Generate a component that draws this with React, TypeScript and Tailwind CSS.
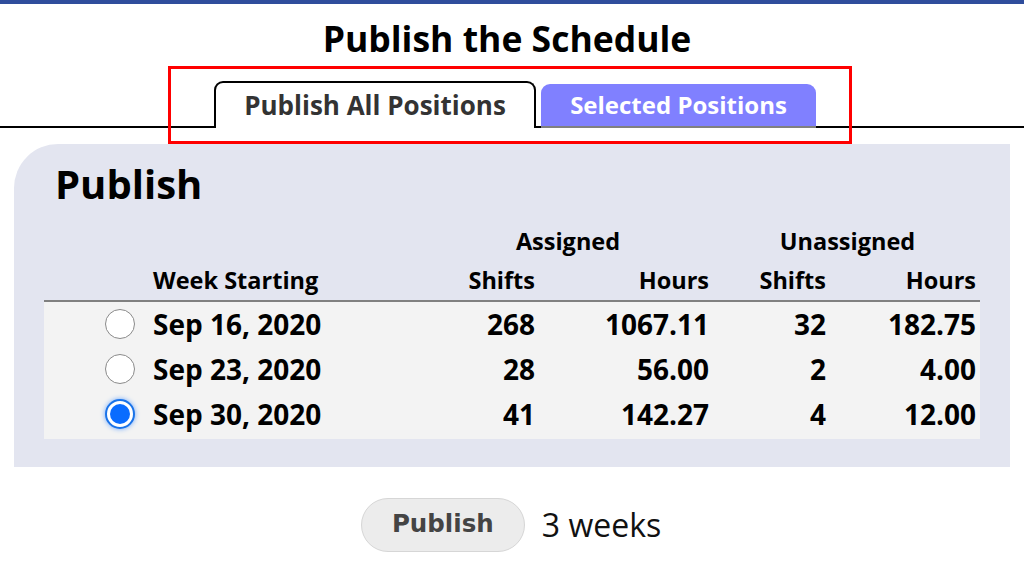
import React from "react";

const rows = [
  { week: "Sep 16, 2020", aShifts: "268", aHours: "1067.11", uShifts: "32", uHours: "182.75", checked: false },
  { week: "Sep 23, 2020", aShifts: "28", aHours: "56.00", uShifts: "2", uHours: "4.00", checked: false },
  { week: "Sep 30, 2020", aShifts: "41", aHours: "142.27", uShifts: "4", uHours: "12.00", checked: true },
];

const grid = "grid grid-cols-[109px_262px_120px_174px_117px_150px] items-center";

function Radio({ checked }: { checked: boolean }) {
  if (checked) {
    return (
      <span className="w-[30px] h-[30px] rounded-full border-2 border-[#1a73e8] bg-white flex items-center justify-center shadow-[0_0_5px_#6aa6ff]">
        <span className="w-[20px] h-[20px] rounded-full bg-[#0a6cff]" />
      </span>
    );
  }
  return <span className="w-[30px] h-[30px] rounded-full border border-[#8a8a8a] bg-white" />;
}

export default function App() {
  return (
    <div className="relative w-[1024px] h-[568px] bg-white overflow-hidden font-['Open_Sans',sans-serif] text-black">
      <div className="h-[4px] bg-[#2f4d9c]" />

      <h1 className="text-center text-[35.5px] font-bold leading-none mt-[17px] pr-[10px]">Publish the Schedule</h1>

      {/* tabs */}
      <div className="mt-[24px] h-[47px] flex items-end pl-[214px] gap-[5px] border-b-2 border-black">
        <div className="h-[47px] -mb-[2px] w-[322px] rounded-t-[9px] border-2 border-b-0 border-black bg-white flex items-center justify-center text-[26px] font-bold text-[#333]">
          Publish All Positions
        </div>
        <div className="h-[44px] -mb-[2px] w-[275px] rounded-t-[9px] bg-[#8080ff] border-b-2 border-[#808080] flex items-center justify-center text-[24px] font-bold text-white">
          Selected Positions
        </div>
      </div>

      {/* panel */}
      <div className="ml-[14px] mt-[16px] w-[996px] h-[323px] rounded-tl-[44px] bg-[#e3e5f0] pt-[20px]">
        <h2 className="pl-[41px] text-[40px] font-bold leading-none">Publish</h2>

        <div className="ml-[30px] mt-[18px] w-[936px]">
          <div className={`${grid} h-[40px] text-[23.5px] font-bold`}>
            <span />
            <span />
            <span className="col-span-2 text-center pl-[12px]">Assigned</span>
            <span className="col-span-2 text-center pl-[10px]">Unassigned</span>
          </div>
          <div className={`${grid} h-[40px] text-[23.5px] font-bold border-b-2 border-[#808080]`}>
            <span />
            <span>Week Starting</span>
            <span className="text-right">Shifts</span>
            <span className="text-right">Hours</span>
            <span className="text-right">Shifts</span>
            <span className="text-right">Hours</span>
          </div>
          <div className="bg-[#f3f3f3] pb-[2px]">
            {rows.map((r) => (
              <div key={r.week} className={`${grid} h-[45px] text-[28px] font-bold`}>
                <span className="flex pl-[61px]">
                  <Radio checked={r.checked} />
                </span>
                <span>{r.week}</span>
                <span className="text-right">{r.aShifts}</span>
                <span className="text-right">{r.aHours}</span>
                <span className="text-right">{r.uShifts}</span>
                <span className="text-right">{r.uHours}</span>
              </div>
            ))}
          </div>
        </div>
      </div>

      {/* footer */}
      <div className="mt-[31px] flex items-center justify-center gap-[17px] pr-[2px]">
        <button className="w-[164px] h-[54px] rounded-full bg-[#ececec] border border-[#d6d6d6] text-[24.5px] font-bold text-[#444] font-['DejaVu_Sans',sans-serif]">
          Publish
        </button>
        <span className="text-[32px] text-[#111]">3 weeks</span>
      </div>

      {/* annotation */}
      <div className="absolute left-[168px] top-[66px] w-[684px] h-[78px] border-[3px] border-[#ff0000]" />
    </div>
  );
}
